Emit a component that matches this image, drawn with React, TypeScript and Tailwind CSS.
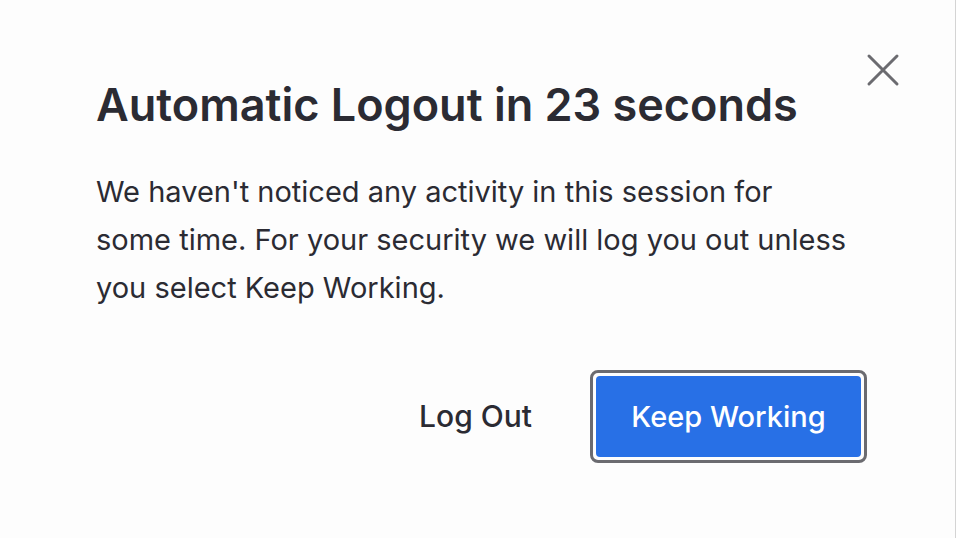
import React from "react";

export default function App() {
  return (
    <div className="w-[956px] h-[538px] bg-[#fdfdfd] flex" style={{ fontFamily: "Inter, 'Noto Sans', sans-serif" }}>
      <div className="relative flex-1 border-r border-[#d4d4d4] flex flex-col pl-[96px] pr-[60px] pt-[75px]">
        <button className="absolute left-[866px] top-[53px] w-[34px] h-[34px] flex items-center justify-center text-[#6b6b70]">
          <svg width="34" height="34" viewBox="0 0 34 34" fill="none" stroke="currentColor" strokeWidth="3" strokeLinecap="round">
            <path d="M3 3 L31 31 M31 3 L3 31" />
          </svg>
        </button>
        <h1 className="text-[45px] leading-[60px] font-semibold text-[#2b2b33]">Automatic Logout in 23 seconds</h1>
        <div className="mt-[33px] text-[29px] leading-[48px] text-[#2b2b33] flex flex-col">
          <span>We haven't noticed any activity in this session for</span>
          <span>some time. For your security we will log you out unless</span>
          <span>you select Keep Working.</span>
        </div>
        <div className="flex justify-end items-center gap-[58px] mt-[58px] pr-[28px]">
          <button className="text-[30px] text-[#2b2b33] font-medium">Log Out</button>
          <div className="rounded-[8px] border-[3px] border-[#6b6b70] p-[3px]">
            <button className="w-[265px] h-[81px] rounded-[4px] bg-[#2870e6] text-white text-[29px] font-medium">Keep Working</button>
          </div>
        </div>
      </div>
    </div>
  );
}
